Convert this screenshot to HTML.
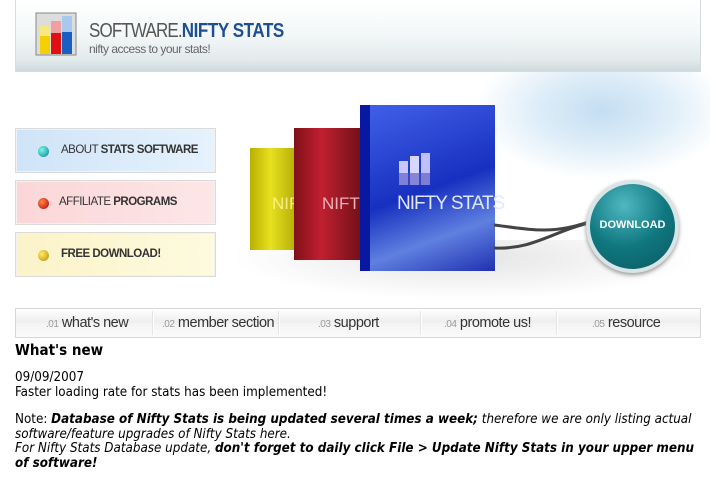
<!DOCTYPE html>
<html><head><meta charset="utf-8"><style>
*{margin:0;padding:0;box-sizing:border-box}
body{width:719px;height:483px;background:#fff;position:relative;overflow:hidden;font-family:"DejaVu Sans Condensed","DejaVu Sans",sans-serif}
.abs{position:absolute}
.hdr{left:15px;top:-2px;width:686px;height:74px;border:1px solid #d4dcdf;background:linear-gradient(#fff 0%,#f3f7f8 50%,#e2eaec 85%,#cfd9dc 100%)}
.btn{left:15px;width:201px;height:45px;border:1px solid #dadada;box-shadow:0 0 0 1px #f2f2f2 inset;font-family:"Liberation Sans",sans-serif;font-size:11.5px;color:#333;letter-spacing:-0.5px;line-height:43px}
.dot{position:absolute;left:22px;top:17px;width:11px;height:11px;border-radius:50%}
.nav{left:15px;top:308px;width:686px;height:30px;border:1px solid #d8d8d8;background:linear-gradient(#fff,#eee 45%,#f4f4f4 55%,#fafafa);font-family:"Liberation Sans",sans-serif;font-size:14.5px;color:#333;letter-spacing:-0.5px}
.nav span{position:absolute;top:6px}
.nav small{font-size:10px;color:#999}
.sep{position:absolute;top:2px;width:2px;height:24px;background:#e4e4e4;border-right:1px solid #fff}
.txt{left:15px;font-size:13.3px;color:#000;white-space:nowrap;line-height:14.5px}
</style></head><body>
<div class="abs hdr"></div>
<svg class="abs" style="left:35px;top:12px" width="42" height="44">
<rect x="1" y="1" width="40" height="42" fill="#ddd" stroke="#888"/>
<rect x="5" y="14" width="10" height="28" fill="#f4d000"/><rect x="5" y="14" width="10" height="10" fill="#f8e880"/>
<rect x="16" y="9" width="10" height="33" fill="#e01010"/><rect x="16" y="9" width="10" height="12" fill="#f0a0a0"/>
<rect x="27" y="4" width="10" height="38" fill="#1a5fc0"/><rect x="27" y="4" width="10" height="16" fill="#a8c8ee"/>
</svg>
<div class="abs" style="left:89px;top:20px;font-family:'Liberation Sans',sans-serif;font-size:20px;letter-spacing:-1px;color:#555;transform:scaleX(0.85);transform-origin:0 0;white-space:nowrap">SOFTWARE.<b style="color:#1e4f92;letter-spacing:-0.5px">NIFTY STATS</b></div>
<div class="abs" style="left:89px;top:42px;font-family:'Liberation Sans',sans-serif;font-size:12px;letter-spacing:-0.5px;color:#666">nifty access to your stats!</div>
<div class="abs" style="left:470px;top:72px;width:240px;height:110px;background:radial-gradient(ellipse at 55% 35%,#c4def2 0%,#deedf8 35%,rgba(255,255,255,0) 68%)"></div>
<div class="abs" style="left:230px;top:240px;width:470px;height:60px;background:radial-gradient(ellipse at 50% 30%,#e4e4e4 0%,rgba(255,255,255,0) 70%)"></div>
<div class="abs btn" style="top:128px;background:linear-gradient(90deg,#cfe4f8,#e6f2fc)"><div class="dot" style="background:radial-gradient(circle at 35% 35%,#7fd,#0a7aa0)"></div><span style="margin-left:45px">ABOUT <b>STATS SOFTWARE</b></span></div>
<div class="abs btn" style="top:180px;background:linear-gradient(90deg,#fbd6d8,#fde6e7)"><div class="dot" style="background:radial-gradient(circle at 35% 35%,#f84,#b00)"></div><span style="margin-left:43px">AFFILIATE <b>PROGRAMS</b></span></div>
<div class="abs btn" style="top:232px;background:linear-gradient(90deg,#fbf3c8,#fdfadf)"><div class="dot" style="background:radial-gradient(circle at 35% 35%,#fe6,#b80)"></div><span style="margin-left:45px"><b>FREE DOWNLOAD!</b></span></div>
<div class="abs" style="left:250px;top:148px;width:52px;height:102px;background:linear-gradient(90deg,#b8b000,#e8e020 40%,#a8a000)"></div>
<div class="abs" style="left:272px;top:194px;color:#fff8a0;font-size:17px;font-family:'Liberation Sans';opacity:.8">NIF</div>
<div class="abs" style="left:294px;top:128px;width:68px;height:132px;background:linear-gradient(90deg,#801018,#c02030 40%,#701018)"></div>
<div class="abs" style="left:322px;top:194px;color:#f0b0b8;font-size:17px;font-family:'Liberation Sans'">NIFTY</div>
<div class="abs" style="left:360px;top:105px;width:135px;height:166px;background:linear-gradient(160deg,#4060e8,#1830c0 50%,#6080e0 75%,#2030b0);border-left:10px solid #0818a0"></div>
<svg class="abs" style="left:398px;top:153px" width="34" height="34"><rect x="1" y="8" width="9" height="24" fill="#c8c8ff"/><rect x="12" y="3" width="9" height="29" fill="#d8d8ff"/><rect x="23" y="0" width="9" height="32" fill="#c0c0f8"/><rect x="1" y="20" width="31" height="12" fill="#5050c0" opacity=".6"/></svg>
<div class="abs" style="left:397px;top:193px;color:#e0e8ff;font-size:19px;font-family:'Liberation Sans';letter-spacing:-1px">NIFTY STATS</div>
<svg class="abs" style="left:494px;top:210px" width="100" height="50"><path d="M0 15 C40 20 60 25 100 10" stroke="#444" stroke-width="3" fill="none"/><path d="M0 38 C40 40 60 20 100 12" stroke="#444" stroke-width="3" fill="none"/></svg>
<div class="abs" style="left:586px;top:180px;width:93px;height:93px;border-radius:50%;background:#d8e4e6;box-shadow:0 2px 4px #999"></div>
<div class="abs" style="left:590px;top:184px;width:85px;height:85px;border-radius:50%;background:radial-gradient(circle at 40% 25%,#4fb8c0,#107880 50%,#0a5860)"></div>
<div class="abs" style="left:586px;top:219px;width:93px;text-align:center;color:#fff;font-weight:bold;font-size:11px;font-family:'Liberation Sans'">DOWNLOAD</div>
<div class="abs nav">
<span style="left:30px"><small>.01</small> what's new</span><div class="sep" style="left:136px"></div>
<span style="left:146px"><small>.02</small> member section</span><div class="sep" style="left:262px"></div>
<span style="left:302px"><small>.03</small> support</span><div class="sep" style="left:404px"></div>
<span style="left:428px"><small>.04</small> promote us!</span><div class="sep" style="left:540px"></div>
<span style="left:576px"><small>.05</small> resource</span>
</div>
<div class="abs" style="left:15px;top:341px;font-size:15px;font-weight:bold;font-family:'DejaVu Sans Condensed',sans-serif">What's new</div>
<div class="abs txt" style="top:371px">09/09/2007<br>Faster loading rate for stats has been implemented!</div>
<div class="abs txt" style="top:413px">Note: <b><i>Database of Nifty Stats is being updated several times a week;</i></b> <i>therefore we are only listing actual<br>software/feature upgrades of Nifty Stats here.<br>For Nifty Stats Database update,</i> <b><i>don't forget to daily click File &gt; Update Nifty Stats in your upper menu<br>of software!</i></b></div>
</body></html>
